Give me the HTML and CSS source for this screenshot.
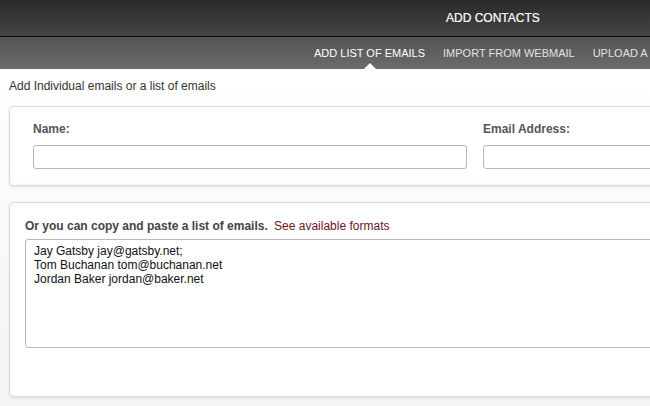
FILE: index.html
```html
<!DOCTYPE html>
<html>
<head>
<meta charset="utf-8">
<link rel="stylesheet" href="styles.css">
</head>
<body>
<div class="page">
  <header class="topbar">
    <h1 class="title">ADD CONTACTS</h1>
  </header>
  <nav class="tabs">
    <a class="tab active">ADD LIST OF EMAILS</a>
    <a class="tab">IMPORT FROM WEBMAIL</a>
    <a class="tab">UPLOAD A FILE</a>
  </nav>
  <main class="content">
    <p class="intro">Add Individual emails or a list of emails</p>
    <section class="card card-fields">
      <div class="field">
        <label class="label">Name:</label>
        <input class="input" type="text">
      </div>
      <div class="field">
        <label class="label">Email Address:</label>
        <input class="input" type="text">
      </div>
    </section>
    <section class="card card-list">
      <p class="label">Or you can copy and paste a list of emails. <a class="formats">See available formats</a></p>
      <textarea class="textarea">Jay Gatsby jay@gatsby.net;
Tom Buchanan tom@buchanan.net
Jordan Baker jordan@baker.net</textarea>
    </section>
  </main>
</div>
</body>
</html>
```
FILE: styles.css
```css
html, body {
  margin: 0;
  padding: 0;
  overflow: hidden;
}
body {
  font-family: "Liberation Sans", Arial, sans-serif;
  background: linear-gradient(#ffffff 70px, #f4f4f4 406px);
  height: 406px;
}
.page {
  width: 1000px;
}
.topbar {
  height: 36px;
  background: linear-gradient(#2a2a2a, #454545);
  border-bottom: 1px solid #0e0e0e;
  display: flex;
  align-items: center;
  padding-left: 446px;
}
.title {
  margin: 0;
  font-size: 12px;
  font-weight: normal;
  color: #fff;
  letter-spacing: 0;
  -webkit-text-stroke: 0.2px #fff;
}
.tabs {
  height: 32px;
  background: linear-gradient(#545454, #6b6b6b);
  display: flex;
  align-items: center;
  padding-left: 305px;
}
.tab {
  position: relative;
  font-size: 11px;
  color: #e2e2e2;
  padding: 0 9px;
  line-height: 32px;
}
.tab.active {
  color: #fff;
}
.tab.active::after {
  content: "";
  position: absolute;
  left: 50%;
  bottom: 0;
  margin-left: -6px;
  border-left: 6px solid transparent;
  border-right: 6px solid transparent;
  border-bottom: 6px solid #fff;
}
.content {
  padding: 9px 0 0 9px;
}
.intro {
  margin: 0 0 12px 0;
  font-size: 12px;
  line-height: 16px;
  color: #333;
}
.card {
  background: #fff;
  border: 1px solid #dcdcdc;
  border-radius: 4px;
  box-shadow: 0 1px 3px rgba(0,0,0,0.10), inset 0 0 6px rgba(0,0,0,0.04);
}
.card-fields {
  display: grid;
  grid-template-columns: 434px 434px;
  column-gap: 16px;
  padding: 15px 23px 16px 23px;
}
.field {
  display: flex;
  flex-direction: column;
}
.label {
  margin: 0;
  font-size: 12px;
  line-height: 14px;
  font-weight: bold;
  color: #555;
}
.input {
  margin-top: 9px;
  height: 24px;
  box-sizing: border-box;
  border: 1px solid #b8b8b8;
  border-radius: 3px;
  background: #fff;
  padding: 0 6px;
  font: 12px "Liberation Sans", Arial, sans-serif;
}
.card-list {
  margin-top: 16px;
  padding: 16px 15px 48px 15px;
}
.card-list .label {
  color: #444;
}
.formats {
  font-weight: normal;
  color: #6b1426;
  margin-left: 3px;
}
.textarea {
  display: block;
  margin-top: 6px;
  width: 900px;
  height: 109px;
  box-sizing: border-box;
  border: 1px solid #b8b8b8;
  border-radius: 3px;
  padding: 4px 8px;
  font: 12px/14px "Liberation Sans", Arial, sans-serif;
  color: #111;
  resize: none;
  background: #fff;
}
```
